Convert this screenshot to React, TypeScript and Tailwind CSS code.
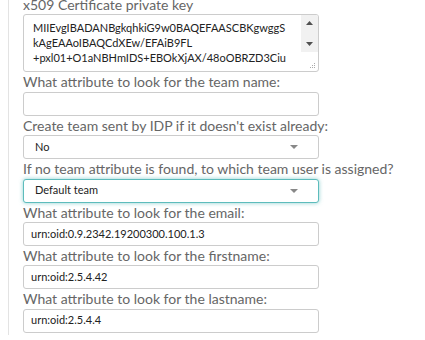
import React from "react";

const Label = ({ children }: { children: React.ReactNode }) => (
  <div className="h-[19.4px] leading-[19px] text-[14px] text-[#666] whitespace-nowrap">{children}</div>
);

const Input = ({ value }: { value?: string }) => (
  <div className="h-[24px] border border-[#ccc] rounded-[3px] bg-white flex items-center px-[7px] text-[11px] text-[#222]">
    {value}
  </div>
);

const Caret = () => (
  <svg width="8" height="4" viewBox="0 0 8 4" className="mr-[20px]">
    <path d="M0 0 L8 0 L4 4 Z" fill="#888" />
  </svg>
);

const Select = ({ value, focused }: { value: string; focused?: boolean }) => (
  <div
    className={
      focused
        ? "h-[24px] border border-[#5dbcbc] shadow-[0_0_4px_rgba(93,188,188,0.7)] rounded-[3px] bg-white flex items-center justify-between pl-[11px] text-[11px] text-[#222]"
        : "h-[24px] border border-[#ccc] rounded-[3px] bg-white flex items-center justify-between pl-[11px] text-[11px] text-[#222]"
    }
  >
    <span>{value}</span>
    <Caret />
  </div>
);

export default function App() {
  return (
    <div className="w-[425px] h-[340px] overflow-hidden bg-white" style={{ fontFamily: "Lato, 'Open Sans', sans-serif" }}>
      <div className="ml-[8px] h-full border-l border-[#e3e3e3] pl-[14px] w-[311px]">
        <div className="-mt-[5px]">
          <Label>x509 Certificate private key</Label>
          <div className="relative h-[58px] border border-[#ccc] rounded-[3px] bg-white overflow-hidden">
            <div className="pl-[9px] pt-[5px] text-[11px] leading-[15px] text-[#222] whitespace-nowrap">
              <div>MIIEvgIBADANBgkqhkiG9w0BAQEFAASCBKgwggS</div>
              <div>kAgEAAoIBAQCdXEw/EFAiB9FL</div>
              <div>+pxl01+O1aNBHmIDS+EBOkXjAX/48oOBRZD3Ciu</div>
            </div>
            <div className="absolute right-0 top-0 w-[17px] h-[37px] bg-[#f1f1f1] flex flex-col items-center justify-between py-[6px]">
              <svg width="7" height="4" viewBox="0 0 7 4"><path d="M0 4 L7 4 L3.5 0 Z" fill="#505050" /></svg>
              <svg width="7" height="4" viewBox="0 0 7 4"><path d="M0 0 L7 0 L3.5 4 Z" fill="#505050" /></svg>
            </div>
            <svg className="absolute right-[2px] bottom-[2px]" width="7" height="7" viewBox="0 0 7 7">
              <rect x="5" y="1" width="1" height="1" fill="#aaa" />
              <rect x="3" y="3" width="1" height="1" fill="#aaa" />
              <rect x="5" y="3" width="1" height="1" fill="#aaa" />
              <rect x="1" y="5" width="1" height="1" fill="#aaa" />
              <rect x="3" y="5" width="1" height="1" fill="#aaa" />
              <rect x="5" y="5" width="1" height="1" fill="#aaa" />
            </svg>
          </div>
        </div>
        <Label>What attribute to look for the team name:</Label>
        <Input />
        <Label>Create team sent by IDP if it doesn't exist already:</Label>
        <Select value="No" />
        <Label>If no team attribute is found, to which team user is assigned?</Label>
        <Select value="Default team" focused />
        <Label>What attribute to look for the email:</Label>
        <Input value="urn:oid:0.9.2342.19200300.100.1.3" />
        <Label>What attribute to look for the firstname:</Label>
        <Input value="urn:oid:2.5.4.42" />
        <Label>What attribute to look for the lastname:</Label>
        <Input value="urn:oid:2.5.4.4" />
      </div>
    </div>
  );
}
